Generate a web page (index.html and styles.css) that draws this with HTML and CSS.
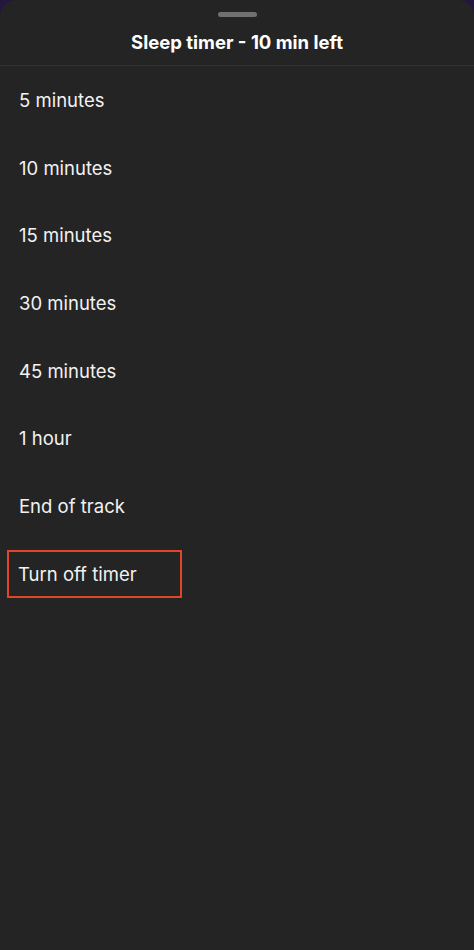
FILE: index.html
```html
<!DOCTYPE html>
<html lang="en">
<head>
    <meta charset="UTF-8">
    <meta name="viewport" content="width=device-width, initial-scale=1.0">
    <title>Sleep timer</title>
    <link rel="stylesheet" href="styles.css">
</head>
<body>
    <div class="sheet">
        <div class="sheet-header">
            <div class="handle"></div>
            <h1 class="title">Sleep timer - 10 min left</h1>
        </div>
        <ul class="options">
            <li class="option">5 minutes</li>
            <li class="option">10 minutes</li>
            <li class="option">15 minutes</li>
            <li class="option">30 minutes</li>
            <li class="option">45 minutes</li>
            <li class="option">1 hour</li>
            <li class="option">End of track</li>
            <li class="option"><span class="highlight">Turn off timer</span></li>
        </ul>
    </div>
</body>
</html>
```

FILE: styles.css
```css
html, body {
    height: 100%;
}
body {
    margin: 0;
    background-color: #24163f;
    font-family: Inter, "Noto Sans", sans-serif;
    color: #f2f2f2;
}
.sheet {
    min-height: 100%;
    background-color: #242424;
    border-radius: 16px 16px 0 0;
}
.sheet-header {
    height: 66px;
    border-bottom: 1px solid #303030;
    display: flex;
    flex-direction: column;
    align-items: center;
    box-sizing: border-box;
    padding-top: 12px;
}
.handle {
    width: 39px;
    height: 5px;
    border-radius: 3px;
    background-color: #707070;
}
.title {
    margin: 14px 0 0;
    font-size: 18.5px;
    font-weight: 700;
    color: #ffffff;
}
.options {
    list-style: none;
    margin: 0;
    padding: 0;
}
.option {
    height: 67.7px;
    display: flex;
    align-items: center;
    padding-left: 19px;
    box-sizing: border-box;
    font-size: 18.5px;
}
.highlight {
    display: flex;
    align-items: center;
    box-sizing: border-box;
    width: 175px;
    height: 48px;
    margin-left: -12px;
    padding-left: 9px;
    border: 2.5px solid #e0452a;
}
```
